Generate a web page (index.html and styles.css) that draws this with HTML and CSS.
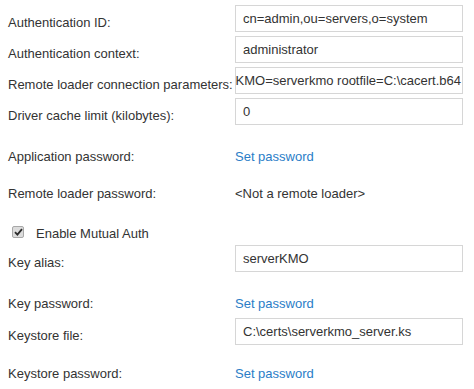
FILE: index.html
```html
<!DOCTYPE html>
<html>
<head>
<meta charset="utf-8">
<link rel="stylesheet" href="styles.css">
</head>
<body>
<form class="form">
  <div class="row first">
    <label class="label">Authentication ID:</label>
    <input class="field" type="text" value="cn=admin,ou=servers,o=system">
  </div>
  <div class="row">
    <label class="label">Authentication context:</label>
    <input class="field" type="text" value="administrator">
  </div>
  <div class="row">
    <label class="label">Remote loader connection parameters:</label>
    <div class="field scrolled"><span>KMO=serverkmo rootfile=C:\cacert.b64</span></div>
  </div>
  <div class="row">
    <label class="label">Driver cache limit (kilobytes):</label>
    <input class="field" type="text" value="0">
  </div>
  <div class="row text after-field">
    <span class="label plain">Application password:</span>
    <a class="link" href="#">Set password</a>
  </div>
  <div class="row text after-text">
    <span class="label plain">Remote loader password:</span>
    <span class="value">&lt;Not a remote loader&gt;</span>
  </div>
  <div class="row check-row">
    <label class="check">
      <span class="box"><svg width="9" height="8" viewBox="0 0 9 8"><path d="M1 4.2 L3.4 6.6 L8 1.2" fill="none" stroke="#2b2b2b" stroke-width="1.8"/></svg></span>
      <span>Enable Mutual Auth</span>
    </label>
  </div>
  <div class="row after-check">
    <label class="label">Key alias:</label>
    <input class="field" type="text" value="serverKMO">
  </div>
  <div class="row text after-field">
    <span class="label plain">Key password:</span>
    <a class="link" href="#">Set password</a>
  </div>
  <div class="row tight">
    <label class="label">Keystore file:</label>
    <input class="field" type="text" value="C:\certs\serverkmo_server.ks">
  </div>
  <div class="row text after-field last">
    <span class="label plain">Keystore password:</span>
    <a class="link" href="#">Set password</a>
  </div>
</form>
</body>
</html>
```

FILE: styles.css
```css
html, body {
  margin: 0;
  padding: 0;
  background: #ffffff;
}

body {
  font-family: "Liberation Sans", Arial, sans-serif;
  font-size: 13px;
  color: #333333;
}

.form {
  padding-left: 8px;
  display: flex;
  flex-direction: column;
}

.row {
  display: grid;
  grid-template-columns: 227px 228px;
  align-items: center;
  height: 27px;
  margin-top: 4px;
}

.row.first {
  margin-top: 5px;
}

.row.after-field {
  margin-top: 18px;
}

.row.after-field.last {
  margin-top: 15px;
}

.row.after-text {
  margin-top: 10px;
}

.row.check-row {
  height: 20px;
  margin-top: 16px;
}

.row.after-check {
  margin-top: 2px;
}

.row.tight {
  margin-top: 1px;
}

.label {
  padding-top: 7px;
  white-space: nowrap;
  color: #333333;
}

.label.plain {
  padding-top: 0;
}

.field {
  box-sizing: border-box;
  width: 228px;
  height: 27px;
  margin: 0;
  border: 1px solid #d6d6d6;
  border-radius: 0;
  padding: 0 7px;
  font-family: "Liberation Sans", Arial, sans-serif;
  font-size: 13px;
  color: #333333;
  background: #ffffff;
  outline: none;
}

.field.scrolled {
  display: flex;
  align-items: center;
  justify-content: flex-end;
  overflow: hidden;
  white-space: nowrap;
  padding: 0 1px;
}

.link {
  color: #2a7dc7;
  text-decoration: none;
}

.value {
  color: #333333;
}

.check {
  display: flex;
  align-items: center;
  padding-left: 4px;
  gap: 12px;
  color: #333333;
}

.box {
  box-sizing: border-box;
  width: 12px;
  height: 12px;
  margin-bottom: 3px;
  border: 1px solid #a8a8a8;
  border-radius: 2px;
  background: #dcdcdc;
  display: flex;
  align-items: center;
  justify-content: center;
}
```
